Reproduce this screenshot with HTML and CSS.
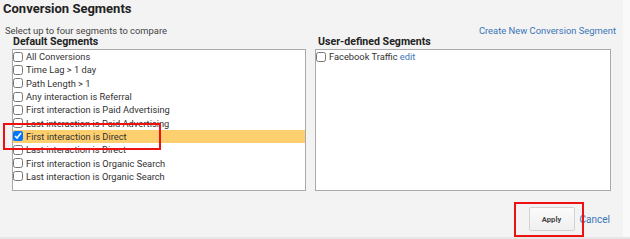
FILE: index.html
```html
<!DOCTYPE html>
<html>
<head>
<meta charset="utf-8">
<link rel="stylesheet" href="styles.css">
</head>
<body>
<div class="page">
  <div class="main">
    <h1 class="title">Conversion Segments</h1>
    <div class="subhead">
      <span class="hint">Select up to four segments to compare</span>
      <a class="link create">Create New Conversion Segment</a>
    </div>
    <div class="columns">
      <div class="col col-left">
        <div class="col-title">Default Segments</div>
        <div class="box">
          <label class="row"><input type="checkbox"><span>All Conversions</span></label>
          <label class="row"><input type="checkbox"><span>Time Lag &gt; 1 day</span></label>
          <label class="row"><input type="checkbox"><span>Path Length &gt; 1</span></label>
          <label class="row"><input type="checkbox"><span>Any interaction is Referral</span></label>
          <label class="row"><input type="checkbox"><span>First interaction is Paid Advertising</span></label>
          <label class="row"><input type="checkbox"><span>Last interaction is Paid Advertising</span></label>
          <label class="row selected"><input type="checkbox" checked><span>First interaction is Direct</span></label>
          <label class="row"><input type="checkbox"><span>Last interaction is Direct</span></label>
          <label class="row"><input type="checkbox"><span>First interaction is Organic Search</span></label>
          <label class="row"><input type="checkbox"><span>Last interaction is Organic Search</span></label>
        </div>
      </div>
      <div class="col col-right">
        <div class="col-title">User-defined Segments</div>
        <div class="box">
          <label class="row"><input type="checkbox"><span>Facebook Traffic <a class="link">edit</a></span></label>
        </div>
      </div>
    </div>
    <div class="footer">
      <button class="apply">Apply</button>
      <a class="link cancel">Cancel</a>
    </div>
  </div>
  <div class="side"></div>
  <div class="mark mark-row"></div>
  <div class="mark mark-apply"></div>
</div>
</body>
</html>
```

FILE: styles.css
```css
* { box-sizing: border-box; }
html, body { margin: 0; padding: 0; }
body {
  width: 630px;
  height: 239px;
  overflow: hidden;
  font-family: Roboto, "Liberation Sans", Arial, sans-serif;
  color: #333;
  background: #f3f3f3;
}
.page {
  position: relative;
  display: flex;
  width: 630px;
  height: 239px;
  border-bottom: 2px solid #e6e6e6;
}
.main {
  width: 623px;
  display: flex;
  flex-direction: column;
}
.side {
  flex: 1;
  background: #f9f9f9;
}
.title {
  margin: 0;
  padding: 1px 0 0 3px;
  font-size: 13px;
  font-weight: bold;
  line-height: 16px;
  color: #222;
}
.subhead {
  display: flex;
  justify-content: space-between;
  align-items: baseline;
  padding: 8px 7px 0 5px;
  font-size: 9.4px;
  line-height: 11px;
}
.hint { color: #444; }
.link {
  color: #3a75b8;
  text-decoration: none;
}
.columns {
  display: flex;
  gap: 9px;
  padding-left: 12px;
}
.col-left { width: 294px; }
.col-right { width: 296px; }
.col-title {
  font-size: 10.6px;
  font-weight: bold;
  line-height: 12px;
  color: #222;
  padding-left: 1px;
  margin-bottom: 1px;
}
.col-right .col-title { padding-left: 3px; }
.box {
  height: 142px;
  background: #fff;
  border: 1px solid #aaa;
}
.row {
  display: flex;
  align-items: center;
  height: 13.3px;
  padding-left: 0;
  font-size: 9.3px;
  color: #333;
  white-space: nowrap;
}
.row input {
  width: 10px;
  height: 10px;
  margin: 0 3px 0 0;
}
.row.selected { background: #fdcf6f; }
.footer {
  display: flex;
  justify-content: flex-end;
  align-items: center;
  gap: 5px;
  padding: 16px 13px 0 0;
}
.apply {
  width: 46px;
  height: 24px;
  border: 1px solid #d3d3d3;
  border-radius: 2px;
  background: linear-gradient(#fbfbfb, #f0f0f0);
  font-family: Roboto, "Liberation Sans", Arial, sans-serif;
  font-size: 7.6px;
  font-weight: bold;
  color: #444;
  padding: 0;
}
.cancel { font-size: 10px; }
.mark {
  position: absolute;
  border: 2px solid #ee1111;
}
.mark-row { left: 3px; top: 123px; width: 158px; height: 27px; }
.mark-apply { left: 514px; top: 202px; width: 70px; height: 35px; }
```
